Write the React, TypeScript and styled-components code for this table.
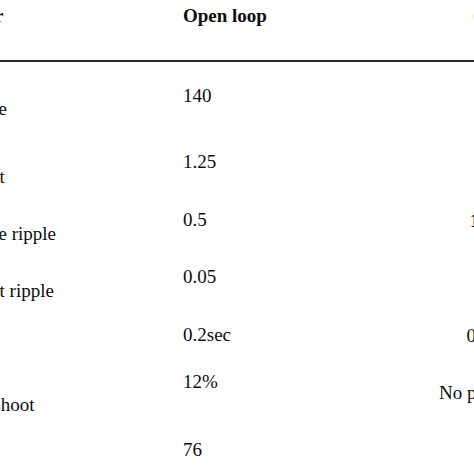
import React from 'react';
import styled, { createGlobalStyle } from 'styled-components';

const GlobalStyle = createGlobalStyle`
  html, body {
    margin: 0;
    padding: 0;
    background: #fff;
    overflow: hidden;
  }
  body {
    font-family: "Liberation Serif", "Times New Roman", serif;
    color: #0d0d0d;
  }
`;

const Page = styled.div`
  width: 474px;
  height: 474px;
  overflow: hidden;
  background: #fff;
`;

// the table is cropped on the left, so it starts past the page edge
const Table = styled.div`
  margin-left: -49px;
  width: 620px;
  padding-top: 4px;
  display: flex;
  flex-direction: column;
`;

const Row = styled.div<{ $height?: number }>`
  display: grid;
  grid-template-columns: 232px 256px 1fr;
  align-items: start;
  height: ${(p) => (p.$height ? `${p.$height}px` : 'auto')};
  font-size: 19px;
  line-height: 23px;
`;

const HeaderRow = styled(Row)`
  font-weight: 700;
`;

const Rule = styled.div`
  height: 2px;
  background: #2a2a2a;
  margin-bottom: 12px;
`;

const Cell = styled.div<{ $drop?: number; $indent?: number; $bold?: boolean }>`
  padding-top: ${(p) => p.$drop ?? 0}px;
  margin-left: ${(p) => p.$indent ?? 0}px;
  white-space: nowrap;
  font-weight: ${(p) => (p.$bold ? 700 : 'inherit')};
`;

type Spec = {
  label: string[];
  labelIndent?: number;
  open: string;
  openDrop: number;
  closed: string;
  closedDrop: number;
  closedIndent: number;
  closedBold?: boolean;
  height?: number;
};

const specs: Spec[] = [
  { label: ['Input', 'voltage'], open: '140', openDrop: 10, closed: '140', closedDrop: 10, closedIndent: 40, height: 68 },
  { label: ['Load', 'current'], open: '1.25', openDrop: 8, closed: '1.25', closedDrop: 8, closedIndent: 40, height: 57 },
  { label: ['Input', 'voltage ripple'], open: '0.5', openDrop: 9, closed: '1', closedDrop: 10, closedIndent: 31, closedBold: true, height: 57 },
  { label: ['Load', 'current ripple'], open: '0.05', openDrop: 9, closed: '0.01', closedDrop: 9, closedIndent: 40, height: 58 },
  { label: ['Rise', 'time'], open: '0.2sec', openDrop: 9, closed: '0.05sec', closedDrop: 10, closedIndent: 27.5, height: 56 },
  { label: ['Peak', 'overshoot'], labelIndent: 8.5, open: '12%', openDrop: 0, closed: 'No peak overshoot', closedDrop: 11, closedIndent: 0, height: 59 },
  { label: ['Gain'], open: '76', openDrop: 9, closed: '92', closedDrop: 9, closedIndent: 40 },
];

const App = () => {
  return (
    <Page>
      <GlobalStyle />
      <Table>
        <HeaderRow $height={56}>
          <Cell $indent={-34}>Parameter</Cell>
          <Cell>Open loop</Cell>
          <Cell $indent={34}>Closed loop</Cell>
        </HeaderRow>
        <Rule />
        {specs.map((s) => (
          <Row key={s.open} $height={s.height}>
            <Cell $indent={s.labelIndent} $drop={s.label.length === 1 ? 9 : 0}>
              {s.label.map((line, i) => (
                <div key={i}>{line}</div>
              ))}
            </Cell>
            <Cell $drop={s.openDrop}>{s.open}</Cell>
            <Cell $drop={s.closedDrop} $indent={s.closedIndent} $bold={s.closedBold}>
              {s.closed}
            </Cell>
          </Row>
        ))}
      </Table>
    </Page>
  );
};

export default App;
